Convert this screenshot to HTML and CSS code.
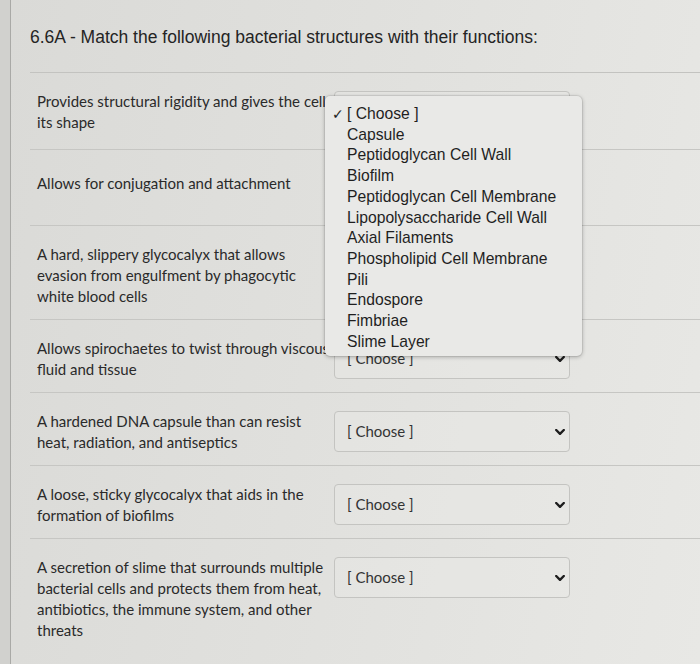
FILE: index.html
```html
<!DOCTYPE html>
<html lang="en">
<head>
<meta charset="utf-8">
<title>6.6A Matching</title>
<link rel="stylesheet" href="styles.css">
</head>
<body>
<div class="page">
  <div class="card">
    <div class="header">6.6A - Match the following bacterial structures with their functions:</div>

    <div class="row roomy">
      <div class="prompt">Provides structural rigidity and gives the cell its shape</div>
      <div class="select-wrap">
        <div class="select"><span>[ Choose ]</span><svg class="chev" viewBox="0 0 10 6" width="10" height="6"><path d="M1.2 1 L5 4.8 L8.8 1" /></svg></div>
        <ul class="menu">
          <li class="checked"><span class="check">✓</span>[ Choose ]</li>
          <li>Capsule</li>
          <li>Peptidoglycan Cell Wall</li>
          <li>Biofilm</li>
          <li>Peptidoglycan Cell Membrane</li>
          <li>Lipopolysaccharide Cell Wall</li>
          <li>Axial Filaments</li>
          <li>Phospholipid Cell Membrane</li>
          <li>Pili</li>
          <li>Endospore</li>
          <li>Fimbriae</li>
          <li>Slime Layer</li>
        </ul>
      </div>
    </div>

    <div class="row roomy">
      <div class="prompt single">Allows for conjugation and attachment</div>
      <div class="select-wrap">
        <div class="select"><span>[ Choose ]</span><svg class="chev" viewBox="0 0 10 6" width="10" height="6"><path d="M1.2 1 L5 4.8 L8.8 1" /></svg></div>
      </div>
    </div>

    <div class="row">
      <div class="prompt">A hard, slippery glycocalyx that allows evasion from engulfment by phagocytic white blood cells</div>
      <div class="select-wrap">
        <div class="select"><span>[ Choose ]</span><svg class="chev" viewBox="0 0 10 6" width="10" height="6"><path d="M1.2 1 L5 4.8 L8.8 1" /></svg></div>
      </div>
    </div>

    <div class="row">
      <div class="prompt">Allows spirochaetes to twist through viscous fluid and tissue</div>
      <div class="select-wrap">
        <div class="select"><span>[ Choose ]</span><svg class="chev" viewBox="0 0 10 6" width="10" height="6"><path d="M1.2 1 L5 4.8 L8.8 1" /></svg></div>
      </div>
    </div>

    <div class="row">
      <div class="prompt">A hardened DNA capsule than can resist heat, radiation, and antiseptics</div>
      <div class="select-wrap">
        <div class="select"><span>[ Choose ]</span><svg class="chev" viewBox="0 0 10 6" width="10" height="6"><path d="M1.2 1 L5 4.8 L8.8 1" /></svg></div>
      </div>
    </div>

    <div class="row">
      <div class="prompt">A loose, sticky glycocalyx that aids in the formation of biofilms</div>
      <div class="select-wrap">
        <div class="select"><span>[ Choose ]</span><svg class="chev" viewBox="0 0 10 6" width="10" height="6"><path d="M1.2 1 L5 4.8 L8.8 1" /></svg></div>
      </div>
    </div>

    <div class="row last">
      <div class="prompt">A secretion of slime that surrounds multiple bacterial cells and protects them from heat, antibiotics, the immune system, and other threats</div>
      <div class="select-wrap">
        <div class="select"><span>[ Choose ]</span><svg class="chev" viewBox="0 0 10 6" width="10" height="6"><path d="M1.2 1 L5 4.8 L8.8 1" /></svg></div>
      </div>
    </div>
  </div>
</div>
</body>
</html>
```
FILE: styles.css
```css
* { box-sizing: border-box; }

html, body {
  margin: 0;
  height: 100%;
}

body {
  background: #d1d1ce;
  color: #2c2c2c;
  overflow: hidden;
}

.page {
  margin-left: 10px;
  min-height: 664px;
  border-left: 1px solid #a9a9a6;
  background: linear-gradient(100deg, #dadad7 0%, #e0e0dd 45%, #e8e8e5 100%);
  padding-left: 19px;
}

.header {
  height: 73px;
  display: flex;
  align-items: center;
  padding-top: 2px;
  font-family: "Liberation Sans", Arial, sans-serif;
  font-size: 17.5px;
  color: #242424;
  border-bottom: 1px solid #c3c3c0;
}

.row {
  display: grid;
  grid-template-columns: 297px 236px;
  align-items: start;
  padding: 18px 0 12px 7px;
  border-bottom: 1px solid #c6c6c3;
  font-family: Lato, "Open Sans", sans-serif;
  font-size: 15px;
  line-height: 21px;
  color: #2a2a2a;
}

.row.roomy { padding-bottom: 16px; }
.row.last { border-bottom: none; }

.prompt.single { padding-top: 5px; }

.select-wrap { position: relative; }

.select {
  height: 41px;
  border: 1px solid #c4c4c1;
  border-radius: 4px;
  display: flex;
  align-items: center;
  justify-content: space-between;
  padding: 0 4px 0 12px;
  font-family: Lato, "Open Sans", sans-serif;
  font-size: 15px;
  color: #333;
  background: rgba(236, 236, 233, 0.35);
}

.chev {
  fill: none;
  stroke: #1e1e1e;
  stroke-width: 2.4;
  stroke-linecap: round;
  stroke-linejoin: round;
}

.menu {
  position: absolute;
  left: -9px;
  top: 5px;
  width: 257px;
  height: 260px;
  margin: 0;
  padding: 8px 0 0 22px;
  list-style: none;
  background: #e9e9e7;
  border-radius: 5px;
  box-shadow: 0 1px 4px rgba(0, 0, 0, 0.28), 0 0 0 1px rgba(0, 0, 0, 0.06);
  font-family: "Liberation Sans", Arial, sans-serif;
  font-size: 15.7px;
  line-height: 20.7px;
  color: #1f1f1f;
  z-index: 2;
}

.menu li { position: relative; }

.check {
  position: absolute;
  left: -15px;
  top: 0;
  font-family: "DejaVu Sans", sans-serif;
  font-size: 14px;
  font-weight: bold;
}
```
